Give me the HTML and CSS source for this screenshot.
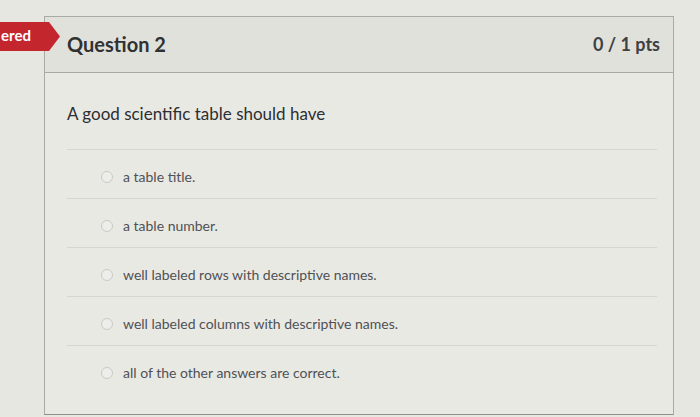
FILE: index.html
```html
<!DOCTYPE html>
<html>
<head>
<meta charset="utf-8">
<link rel="stylesheet" href="styles.css">
</head>
<body>
<div class="page">
  <div class="badge">ered</div>
  <div class="card">
    <div class="card-header">
      <span class="q-title">Question 2</span>
      <span class="q-pts">0 / 1 pts</span>
    </div>
    <div class="card-body">
      <p class="q-text">A good scientific table should have</p>
      <ul class="answers">
        <li class="answer"><span class="radio"></span><span class="label">a table title.</span></li>
        <li class="answer"><span class="radio"></span><span class="label">a table number.</span></li>
        <li class="answer"><span class="radio"></span><span class="label">well labeled rows with descriptive names.</span></li>
        <li class="answer"><span class="radio"></span><span class="label">well labeled columns with descriptive names.</span></li>
        <li class="answer"><span class="radio"></span><span class="label">all of the other answers are correct.</span></li>
      </ul>
    </div>
  </div>
</div>
</body>
</html>
```
FILE: styles.css
```css
html, body {
  margin: 0;
  padding: 0;
}
body {
  background: #e7e7e2;
  font-family: Lato, "Open Sans", sans-serif;
  width: 700px;
  height: 417px;
  overflow: hidden;
}
.page {
  position: relative;
  padding: 16px 0 0 44px;
}
.badge {
  position: absolute;
  left: 0;
  top: 22px;
  height: 29px;
  width: 62px;
  background: #c4262e;
  color: #fff;
  font-weight: 700;
  font-size: 15px;
  line-height: 27px;
  padding-left: 1px;
  box-sizing: border-box;
  clip-path: polygon(0 0, 49px 0, 60px 14.5px, 49px 29px, 0 29px);
}
.card {
  width: 630px;
  border: 1px solid #a9a9a6;
  border-bottom-color: #8f8f8c;
  background: #e9e9e4;
  box-sizing: border-box;
}
.card-header {
  height: 56px;
  box-sizing: border-box;
  background: #e1e1dc;
  border-bottom: 1px solid #a8a8a4;
  display: flex;
  align-items: center;
  justify-content: space-between;
  padding: 0 13px 2px 22px;
}
.q-title {
  font-size: 20px;
  font-weight: 700;
  color: #2f3133;
}
.q-pts {
  font-size: 18px;
  font-weight: 700;
  color: #3e4042;
}
.card-body {
  padding: 30px 16px 20px 22px;
}
.q-text {
  margin: 0;
  font-size: 17px;
  line-height: 21px;
  color: #2c2e30;
}
.answers {
  list-style: none;
  margin: 25px 0 0 0;
  padding: 0;
}
.answer {
  border-top: 1px solid #d6d6d0;
  height: 49px;
  box-sizing: border-box;
  display: flex;
  align-items: center;
  padding: 5px 0 0 34px;
}
.radio {
  width: 12px;
  height: 12px;
  border-radius: 50%;
  border: 1px solid #cacac5;
  background: #ededea;
  box-sizing: border-box;
  margin-right: 10px;
}
.label {
  font-size: 14px;
  color: #4f5154;
}
```
